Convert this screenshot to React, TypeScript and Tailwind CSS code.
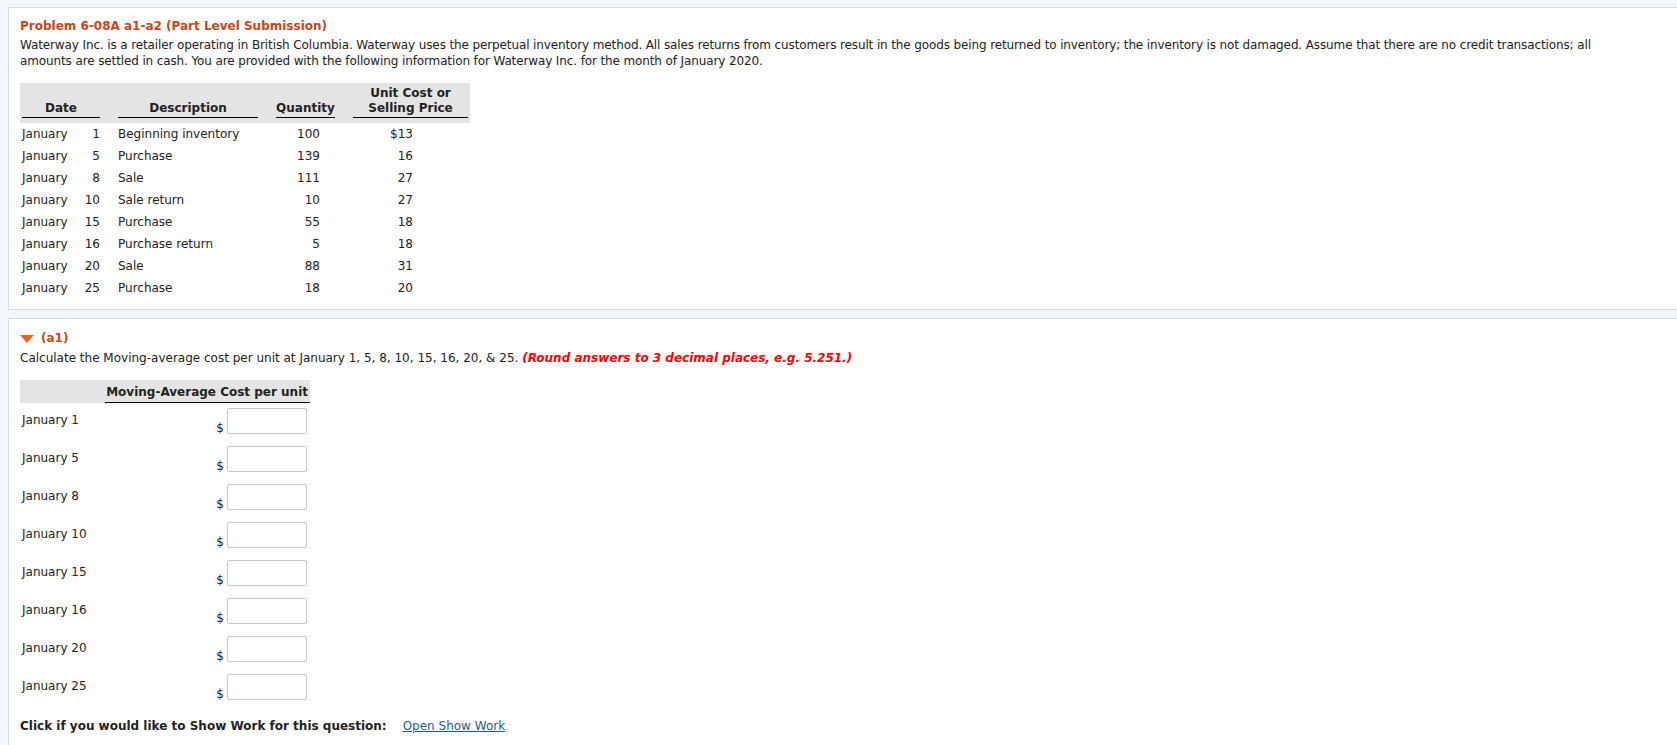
import React from "react";

interface Txn {
  day: number;
  desc: string;
  qty: number;
  price: string;
}

const txns: Txn[] = [
  { day: 1, desc: "Beginning inventory", qty: 100, price: "$13" },
  { day: 5, desc: "Purchase", qty: 139, price: "16" },
  { day: 8, desc: "Sale", qty: 111, price: "27" },
  { day: 10, desc: "Sale return", qty: 10, price: "27" },
  { day: 15, desc: "Purchase", qty: 55, price: "18" },
  { day: 16, desc: "Purchase return", qty: 5, price: "18" },
  { day: 20, desc: "Sale", qty: 88, price: "31" },
  { day: 25, desc: "Purchase", qty: 18, price: "20" },
];

const answerDays = [1, 5, 8, 10, 15, 16, 20, 25];

function HeaderCell({ width, className = "", children }: { width: string; className?: string; children: React.ReactNode }) {
  return (
    <div className={`${width} ${className} flex flex-col justify-end px-[2px] pb-[5px]`}>
      <div className="border-b border-black pb-[1px] text-center font-bold leading-[15px]">{children}</div>
    </div>
  );
}

export default function App() {
  return (
    <div className="min-h-screen bg-[#f4f7fa] pt-[7px] pl-[8px] font-['Verdana','DejaVu_Sans',sans-serif] text-[12px] text-[#222]">
      {/* problem statement */}
      <section className="border-y border-l border-[#d3dae2] bg-white pl-[11px] pr-[30px] pt-[10px] pb-[10px]">
        <h1 className="font-bold leading-[16px] text-[#c8461a]">Problem 6-08A a1-a2 (Part Level Submission)</h1>
        <p className="mt-[3px] leading-[16px] tracking-[-0.12px]">
          Waterway Inc. is a retailer operating in British Columbia. Waterway uses the perpetual inventory method. All sales returns from customers result in the goods being returned to inventory; the inventory is not damaged. Assume that there are no credit transactions; all
          <br />
          amounts are settled in cash. You are provided with the following information for Waterway Inc. for the month of January 2020.
        </p>

        <div className="mt-[14px] w-[450px]">
          <div className="flex h-[40px] bg-[#e4e4e4]">
            <HeaderCell width="w-[82px]">Date</HeaderCell>
            <HeaderCell width="w-[144px]" className="ml-[14px]">Description</HeaderCell>
            <HeaderCell width="w-[63px]" className="ml-[14px]">Quantity</HeaderCell>
            <HeaderCell width="w-[119px]" className="ml-[14px]">
              Unit Cost or
              <br />
              Selling Price
            </HeaderCell>
          </div>
          {txns.map((t) => (
            <div key={t.day} className="flex h-[22px] items-center leading-[16px]">
              <div className="flex w-[82px] justify-between px-[2px]">
                <span>January</span>
                <span>{t.day}</span>
              </div>
              <div className="ml-[14px] w-[144px] px-[2px]">{t.desc}</div>
              <div className="ml-[14px] w-[63px] pr-[17px] text-right">{t.qty}</div>
              <div className="ml-[14px] w-[119px] pr-[57px] text-right">{t.price}</div>
            </div>
          ))}
        </div>
      </section>

      {/* part a1 */}
      <section className="mt-[8px] border-t border-l border-[#d3dae2] bg-white pl-[11px] pt-[11px] pb-[20px]">
        <div className="flex items-center gap-[7px] leading-[16px]">
          <svg width="14" height="8" viewBox="0 0 14 8" className="mt-[1px]">
            <path d="M0 0 H14 L7 8 Z" fill="#f0641e" />
          </svg>
          <span className="font-bold text-[#c8461a]">(a1)</span>
        </div>
        <p className="mt-[4px] leading-[16px]">
          Calculate the Moving-average cost per unit at January 1, 5, 8, 10, 15, 16, 20, &amp; 25.{" "}
          <span className="font-bold italic text-[#f00]">(Round answers to 3 decimal places, e.g. 5.251.)</span>
        </p>

        <div className="mt-[14px] w-[290px]">
          <div className="flex h-[23px] bg-[#e4e4e4]">
            <div className="w-[85px]" />
            <div className="flex w-[205px] items-end justify-end whitespace-nowrap border-b border-black pb-[2px] pr-[2px] font-bold leading-[15px]">
              Moving-Average Cost per unit
            </div>
          </div>
          {answerDays.map((d) => (
            <div key={d} className="flex h-[38px] items-start">
              <div className="w-[85px] pl-[2px] pt-[9px] leading-[16px]">January {d}</div>
              <div className="flex w-[205px] items-end justify-end pr-[3px] pt-[5px]">
                <span className="mr-[3px] leading-[12px]">$</span>
                <input
                  type="text"
                  className="h-[26px] w-[80px] rounded-[2px] border border-[#c8c8c8] bg-white px-1 text-[12px] outline-none"
                />
              </div>
            </div>
          ))}
        </div>

        <div className="mt-[11px] flex leading-[16px]">
          <span className="font-bold">Click if you would like to Show Work for this question:</span>
          <a href="#" className="ml-[16px] text-[#1f5b94] underline">
            Open Show Work
          </a>
        </div>
      </section>
    </div>
  );
}
